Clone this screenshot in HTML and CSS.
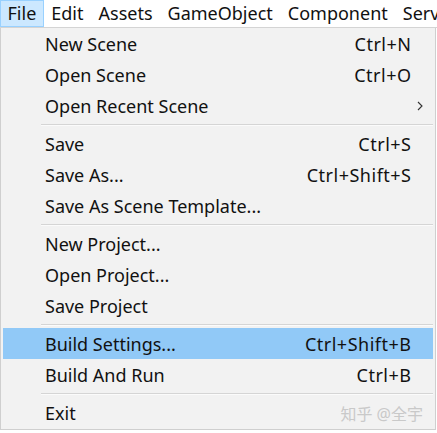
FILE: index.html
```html
<!DOCTYPE html>
<html>
<head>
<meta charset="utf-8">
<link rel="stylesheet" href="styles.css">
</head>
<body>
<div class="menubar">
  <span class="top active">File</span>
  <span class="top">Edit</span>
  <span class="top">Assets</span>
  <span class="top">GameObject</span>
  <span class="top">Component</span>
  <span class="top">Services</span>
</div>
<div class="menu">
  <div class="item"><span>New Scene</span><span class="key">Ctrl+N</span></div>
  <div class="item"><span>Open Scene</span><span class="key">Ctrl+O</span></div>
  <div class="item"><span>Open Recent Scene</span><svg class="arrow" width="6" height="10" viewBox="0 0 6 10"><path d="M1 1 L5 5 L1 9" fill="none" stroke="#333" stroke-width="1.1"/></svg></div>
  <div class="sep"></div>
  <div class="item"><span>Save</span><span class="key">Ctrl+S</span></div>
  <div class="item"><span>Save As...</span><span class="key">Ctrl+Shift+S</span></div>
  <div class="item"><span>Save As Scene Template...</span></div>
  <div class="sep"></div>
  <div class="item"><span>New Project...</span></div>
  <div class="item"><span>Open Project...</span></div>
  <div class="item"><span>Save Project</span></div>
  <div class="sep"></div>
  <div class="item hl"><span>Build Settings...</span><span class="key">Ctrl+Shift+B</span></div>
  <div class="item"><span>Build And Run</span><span class="key">Ctrl+B</span></div>
  <div class="sep"></div>
  <div class="item"><span>Exit</span><span class="mark">知乎 @全宇</span></div>
</div>
</body>
</html>
```
FILE: styles.css
```css
html, body {
  margin: 0;
  padding: 0;
  background: #ffffff;
  overflow: hidden;
}
body {
  width: 437px;
  height: 433px;
  font-family: "Noto Sans", "Noto Sans CJK SC", sans-serif;
  font-size: 18px;
  color: #111;
}
.menubar {
  height: 27px;
  display: flex;
  align-items: stretch;
  white-space: nowrap;
  overflow: hidden;
  border-bottom: 1px solid #d4d4d4;
  background: #fff;
}
.top {
  display: flex;
  align-items: center;
  padding: 0 6.5px;
  line-height: 25px;
  border: 1px solid transparent;
}
.top.active {
  background: #cce8ff;
  border-color: #99d1ff;
}
.menu {
  width: 434px;
  background: #f2f2f2;
  border-left: 1px solid #cfcfcf;
  border-right: 1px solid #cfcfcf;
  border-bottom: 1px solid #cfcfcf;
  padding: 0 0 1px;
}
.item {
  height: 31px;
  margin: 0 2px;
  padding: 0 22px 0 42px;
  display: flex;
  align-items: center;
  justify-content: space-between;
  white-space: nowrap;
}
.item.hl {
  background: #91c9f7;
}
.key {
  letter-spacing: 0.5px;
  margin-right: -0.5px;
}
.arrow {
  margin-right: -12px;
}
.sep {
  height: 1px;
  margin: 3px 2px 2px 40px;
  background: #d5d5d5;
  border-bottom: 1px solid #fbfbfb;
}
.mark {
  color: #c9c9c9;
  font-size: 16px;
  margin-right: -12px;
}
```
